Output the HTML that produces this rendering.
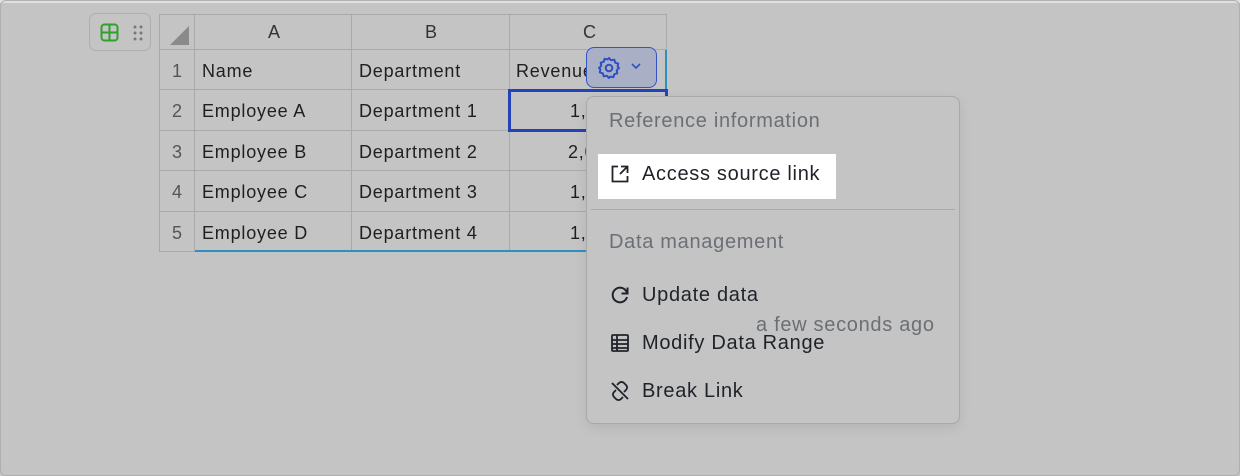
<!DOCTYPE html>
<html><head><style>
*{margin:0;padding:0;box-sizing:border-box}
body{width:1240px;height:476px;background:#c4c4c4;font-family:"Liberation Sans",sans-serif;position:relative;overflow:hidden;color:#1f1f1f}
.frame{position:absolute;left:0;top:0;width:1240px;height:476px;border:1px solid #b0b0b0;border-radius:6px}
.top{position:absolute;left:0;top:0;width:1240px;height:3px;background:#e0e0e0}
.a{position:absolute}
.vl{position:absolute;width:1px;background:#a9a9a9}
.hl{position:absolute;height:1px;background:#a9a9a9}
.t{position:absolute;font-size:18px;white-space:nowrap;letter-spacing:0.8px}
.m{position:absolute;font-size:20px;white-space:nowrap;color:#1f2329;letter-spacing:0.7px}
.g{position:absolute;font-size:20px;white-space:nowrap;color:#6b6f76;letter-spacing:0.7px}
</style></head><body>
<div class="top"></div>
<div class="frame"></div>
<div class="a" style="left:89px;top:13px;width:62px;height:38px;border:1px solid #aeaeae;border-radius:7px"></div>
<svg class="a" style="left:100px;top:23px" width="20" height="20" viewBox="0 0 20 20"><rect x="1.5" y="1.5" width="16" height="16" rx="3" fill="none" stroke="#2ea12e" stroke-width="2"/><path d="M9.5 2v15M2 9.5h15" stroke="#2ea12e" stroke-width="2"/></svg>
<svg class="a" style="left:132px;top:24px" width="12" height="18"><g fill="#777"><circle cx="3" cy="3" r="1.5"/><circle cx="9" cy="3" r="1.5"/><circle cx="3" cy="9" r="1.5"/><circle cx="9" cy="9" r="1.5"/><circle cx="3" cy="15" r="1.5"/><circle cx="9" cy="15" r="1.5"/></g></svg>
<div class="vl" style="left:159px;top:14px;height:238px"></div>
<div class="vl" style="left:194px;top:14px;height:238px"></div>
<div class="vl" style="left:351px;top:14px;height:238px"></div>
<div class="vl" style="left:509px;top:14px;height:238px"></div>
<div class="vl" style="left:666px;top:14px;height:36px"></div>
<div class="hl" style="left:159px;top:14px;width:508px"></div>
<div class="hl" style="left:159px;top:49px;width:508px"></div>
<div class="hl" style="left:159px;top:89px;width:428px"></div>
<div class="hl" style="left:159px;top:130px;width:428px"></div>
<div class="hl" style="left:159px;top:170px;width:428px"></div>
<div class="hl" style="left:159px;top:211px;width:428px"></div>
<div class="hl" style="left:159px;top:251px;width:36px"></div>
<div class="a" style="left:195px;top:250px;width:392px;height:2px;background:#2f8fc0"></div>
<div class="a" style="left:665px;top:50px;width:2px;height:40px;background:#2f8fc0"></div>
<svg class="a" style="left:170px;top:26px" width="20" height="20"><path d="M19 0V19H0Z" fill="#8a8a8a"/></svg>
<div class="t" style="left:268px;top:22px;color:#333">A</div>
<div class="t" style="left:425px;top:22px;color:#333">B</div>
<div class="t" style="left:583px;top:22px;color:#333">C</div>
<div class="t" style="left:172px;top:61px;color:#555">1</div>
<div class="t" style="left:172px;top:101px;color:#555">2</div>
<div class="t" style="left:172px;top:142px;color:#555">3</div>
<div class="t" style="left:172px;top:182px;color:#555">4</div>
<div class="t" style="left:172px;top:223px;color:#555">5</div>
<div class="t" style="left:202px;top:61px">Name</div>
<div class="t" style="left:359px;top:61px">Department</div>
<div class="t" style="left:516px;top:61px">Revenue</div>
<div class="t" style="left:202px;top:101px">Employee A</div>
<div class="t" style="left:359px;top:101px">Department 1</div>
<div class="t" style="left:570px;top:101px">1,0</div>
<div class="t" style="left:202px;top:142px">Employee B</div>
<div class="t" style="left:359px;top:142px">Department 2</div>
<div class="t" style="left:568px;top:142px">2,0</div>
<div class="t" style="left:202px;top:182px">Employee C</div>
<div class="t" style="left:359px;top:182px">Department 3</div>
<div class="t" style="left:570px;top:182px">1,3</div>
<div class="t" style="left:202px;top:223px">Employee D</div>
<div class="t" style="left:359px;top:223px">Department 4</div>
<div class="t" style="left:570px;top:223px">1,5</div>
<div class="a" style="left:508px;top:89px;width:160px;height:43px;border:3px solid #2443b8"></div>
<div class="a" style="left:586px;top:47px;width:71px;height:41px;background:#a9afc4;border:1px solid #3354c8;border-radius:8px"></div>
<svg class="a" style="left:597px;top:56px" width="24" height="24" viewBox="0 0 24 24" fill="none" stroke="#2d4fc4" stroke-width="2"><path d="M12 2l2.2 2.3 3.1-.6.9 3 3 .9-.6 3.1L22 12l-2.3 2.2.6 3.1-3 .9-.9 3-3.1-.6L12 22l-2.2-2.3-3.1.6-.9-3-3-.9.6-3.1L2 12l2.3-2.2-.6-3.1 3-.9.9-3 3.1.6z" stroke-linejoin="round"/><circle cx="12" cy="12" r="3.3"/></svg>
<svg class="a" style="left:630px;top:62px" width="12" height="8"><path d="M2 2l4 4 4-4" fill="none" stroke="#2d4fc4" stroke-width="1.6"/></svg>
<div class="a" style="left:586px;top:96px;width:374px;height:328px;border:1px solid #a8a8a8;border-radius:8px;background:#c4c4c4;box-shadow:0 4px 12px rgba(0,0,0,.08)"></div>
<div class="g" style="left:609px;top:110px">Reference information</div>
<div class="a" style="left:598px;top:154px;width:238px;height:45px;background:#fff"></div>
<svg class="a" style="left:610px;top:164px" width="20" height="20" viewBox="0 0 20 20" fill="none" stroke="#1f2329" stroke-width="1.8"><path d="M8 2.5H2.5v15h15V12"/><path d="M11 2.5h6.5V9M17.5 2.5l-7.5 7.5"/></svg>
<div class="m" style="left:642px;top:163px">Access source link</div>
<div class="a" style="left:591px;top:209px;width:364px;height:1px;background:#a8a8a8"></div>
<div class="g" style="left:609px;top:231px">Data management</div>
<svg class="a" style="left:610px;top:285px" width="20" height="20" viewBox="0 0 20 20" fill="none" stroke="#1f2329" stroke-width="2"><path d="M17 8A7.3 7.3 0 1 0 17 12"/><path d="M17.5 2.5v6h-6"/></svg>
<div class="m" style="left:642px;top:284px">Update data</div>
<div class="g" style="left:756px;top:314px">a few seconds ago</div>
<svg class="a" style="left:610px;top:333px" width="20" height="20" viewBox="0 0 20 20" fill="none" stroke="#1f2329" stroke-width="1.8"><rect x="2" y="2" width="16" height="16" rx="1"/><path d="M2 7h16M2 11h16M2 15h16M7 2v16"/></svg>
<div class="m" style="left:642px;top:332px">Modify Data Range</div>
<svg class="a" style="left:610px;top:381px" width="20" height="20" viewBox="0 0 20 20" fill="none" stroke="#1f2329" stroke-width="1.8"><path d="M7 4l2-2a3.5 3.5 0 0 1 5 0l2 2a3.5 3.5 0 0 1 0 5l-2 2M13 16l-2 2a3.5 3.5 0 0 1-5 0l-2-2a3.5 3.5 0 0 1 0-5l2-2M2 2l16 16"/></svg>
<div class="m" style="left:642px;top:380px">Break Link</div>
</body></html>
